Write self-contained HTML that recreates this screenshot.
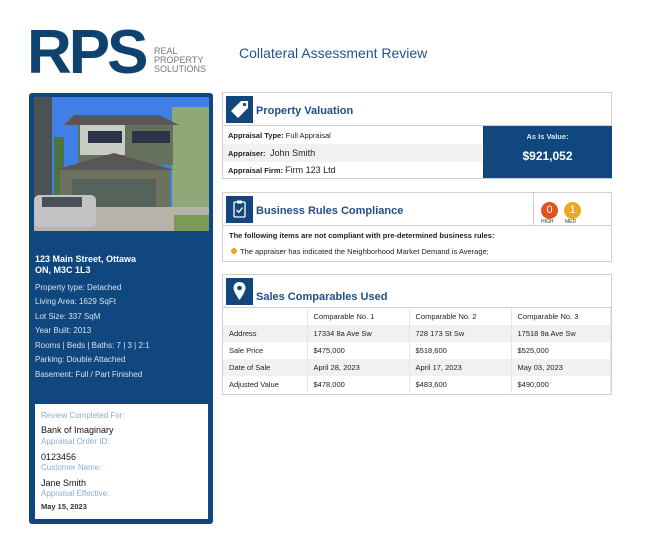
<!DOCTYPE html>
<html><head><meta charset="utf-8"><style>
*{margin:0;padding:0;box-sizing:border-box}
body{width:650px;height:550px;background:#fff;font-family:"Liberation Sans",Arial,sans-serif;position:relative;overflow:hidden;color:#222}
.abs{position:absolute}
.panel{position:absolute;left:222px;width:390px;border:1px solid #cfcfcf;background:#fff}
.hdr{height:33px;border-bottom:1px solid #cfcfcf;position:relative}
.ico{position:absolute;left:3px;top:3px;width:27px;height:27px;background:#12467c}
.ttl{position:absolute;left:33px;top:12px;font-size:11px;font-weight:bold;color:#1f4f86}
.side{left:29px;top:93px;width:184px;height:431px;background:#0f477e;border-radius:3px}
.st{font-size:8px;color:#d6e2ef;position:absolute;left:35px}
.lbl{font-size:8px;color:#8aaed3;position:absolute;left:41px}
.val{font-size:9px;color:#111;position:absolute;left:41px}
table{border-collapse:collapse;width:100%;font-size:7.5px}
td{height:17px;padding-left:6px;border-right:1px solid #e6e6e6}
tr:nth-child(even) td{background:#f1f1f1}
</style></head><body>
<div class="abs" style="left:27px;top:20px;font-size:62px;font-weight:bold;color:#10426f;letter-spacing:-3px;line-height:66px">RPS</div>
<div class="abs" style="left:154px;top:47px;font-size:9px;line-height:9px;color:#777">REAL<br>PROPERTY<br>SOLUTIONS</div>
<div class="abs" style="left:239px;top:45px;font-size:14px;color:#1e5490">Collateral Assessment Review</div>

<div class="abs side"></div>
<svg class="abs" style="left:34px;top:97px" width="175" height="134" viewBox="0 0 175 134">
<rect width="175" height="134" fill="#3f7fe6"/>
<rect x="0" y="0" width="18" height="110" fill="#4a5254"/>
<rect x="138" y="10" width="37" height="115" fill="#8fa877"/>
<rect x="20" y="40" width="10" height="70" fill="#4d7340"/>
<polygon points="40,18 125,18 145,28 30,28" fill="#5a5658"/>
<rect x="44" y="28" width="95" height="40" fill="#66705e"/>
<rect x="46" y="28" width="45" height="30" fill="#c9ccc4"/>
<rect x="54" y="34" width="34" height="12" fill="#2a3446"/>
<rect x="98" y="34" width="38" height="12" fill="#2a3446"/>
<polygon points="20,73 80,56 140,73" fill="#5a5658"/>
<rect x="26" y="73" width="110" height="52" fill="#6d725f"/>
<rect x="38" y="82" width="84" height="40" fill="#55635a"/>
<rect x="0" y="110" width="175" height="24" fill="#b8b3a9"/>
<rect x="140" y="118" width="35" height="16" fill="#7a9a55"/>
<rect x="0" y="98" width="62" height="32" rx="5" fill="#c3c3c6"/>
<rect x="8" y="100" width="40" height="10" fill="#4a5058"/>
</svg>
<div class="abs" style="left:35px;top:254px;font-size:9px;font-weight:bold;color:#fff;line-height:11px">123 Main Street, Ottawa<br>ON, M3C 1L3</div>
<div class="st" style="top:283px">Property type: Detached</div>
<div class="st" style="top:297px">Living Area: 1629 SqFt</div>
<div class="st" style="top:312px">Lot Size: 337 SqM</div>
<div class="st" style="top:326px">Year Built: 2013</div>
<div class="st" style="top:341px">Rooms | Beds | Baths: 7 | 3 | 2:1</div>
<div class="st" style="top:355px">Parking: Double Attached</div>
<div class="st" style="top:370px">Basement: Full / Part Finished</div>
<div class="abs" style="left:35px;top:404px;width:173px;height:115px;background:#fff"></div>
<div class="lbl" style="top:411px">Review Completed For:</div>
<div class="val" style="top:425px">Bank of Imaginary</div>
<div class="lbl" style="top:437px">Appraisal Order ID:</div>
<div class="val" style="top:452px">0123456</div>
<div class="lbl" style="top:463px">Customer Name:</div>
<div class="val" style="top:478px">Jane Smith</div>
<div class="lbl" style="top:489px">Appraisal Effective:</div>
<div class="val" style="top:502px;font-size:7.5px;font-weight:bold;color:#333">May 15, 2023</div>

<div class="panel" style="top:92px;height:87px">
<div class="hdr"><div class="ico"><svg width="27" height="27" viewBox="0 0 27 27"><path d="M15 5 L22 5 L22 12 L12 22 L5 15 Z" fill="#fff"/><circle cx="18.5" cy="8.5" r="1.6" fill="#12467c"/></svg></div><div class="ttl">Property Valuation</div></div>
<div class="abs" style="left:0;top:34px;width:259px;font-size:7.5px">
<div style="height:17px;padding:4px 0 0 5px"><b>Appraisal Type:</b> Full Appraisal</div>
<div style="height:18px;padding:4px 0 0 5px;background:#f1f1f1"><b>Appraiser:</b> <span style="font-size:9px">&nbsp;John Smith</span></div>
<div style="height:17px;padding:3px 0 0 5px"><b>Appraisal Firm:</b> <span style="font-size:9px">Firm 123 Ltd</span></div>
</div>
<div class="abs" style="left:260px;top:33px;width:129px;height:52px;background:#0f477e;color:#fff;text-align:center">
<div style="font-size:7.5px;font-weight:bold;margin-top:6px;color:#dfe8f2">As Is Value:</div>
<div style="font-size:12px;font-weight:bold;margin-top:8px">$921,052</div></div>
</div>

<div class="panel" style="top:192px;height:70px">
<div class="hdr"><div class="ico"><svg width="27" height="27" viewBox="0 0 27 27"><rect x="8" y="6" width="11" height="15" rx="1" fill="none" stroke="#fff" stroke-width="1.3"/><rect x="11" y="4.5" width="5" height="3" fill="#fff"/><path d="M10.5 14 L12.8 16.3 L16.5 11.5" fill="none" stroke="#fff" stroke-width="1.3"/></svg></div><div class="ttl" style="top:12px">Business Rules Compliance</div>
<div class="abs" style="left:310px;top:0;width:1px;height:33px;background:#cfcfcf"></div>
<div class="abs" style="left:318px;top:9px;width:17px;height:17px;border-radius:50%;background:#e0531f;color:#fff;font-size:11px;text-align:center;line-height:17px">0</div>
<div class="abs" style="left:341px;top:9px;width:17px;height:17px;border-radius:50%;background:#eba91d;color:#fff;font-size:11px;text-align:center;line-height:17px">1</div>
<div class="abs" style="left:318px;top:26px;font-size:5px;color:#333">HIGH</div>
<div class="abs" style="left:342px;top:26px;font-size:5px;color:#333">MED</div>
</div>
<div class="abs" style="left:6px;top:38px;font-size:7.5px;font-weight:bold">The following items are not compliant with pre-determined business rules:</div>
<div class="abs" style="left:8px;top:55px;width:6px;height:6px;border-radius:50%;background:#e7a81e"></div>
<div class="abs" style="left:17px;top:54px;font-size:7.5px">The appraiser has indicated the Neighborhood Market Demand is Average;</div>
</div>

<div class="panel" style="top:274px;height:121px">
<div class="hdr"><div class="ico"><svg width="27" height="27" viewBox="0 0 27 27"><path d="M13.5 4 C9.5 4 7.5 7 7.5 10 C7.5 14 13.5 22 13.5 22 C13.5 22 19.5 14 19.5 10 C19.5 7 17.5 4 13.5 4 Z" fill="#fff"/><circle cx="13.5" cy="10" r="2.3" fill="#12467c"/></svg></div><div class="ttl" style="top:16px">Sales Comparables Used</div></div>
<table>
<tr><td style="width:84px"></td><td style="width:102px">Comparable No. 1</td><td style="width:102px">Comparable No. 2</td><td>Comparable No. 3</td></tr>
<tr><td>Address</td><td>17334 8a Ave Sw</td><td>728 173 St Sw</td><td>17518 9a Ave Sw</td></tr>
<tr><td>Sale Price</td><td>$475,000</td><td>$518,600</td><td>$525,000</td></tr>
<tr><td>Date of Sale</td><td>April 28, 2023</td><td>April 17, 2023</td><td>May 03, 2023</td></tr>
<tr><td>Adjusted Value</td><td>$478,000</td><td>$483,600</td><td>$490,000</td></tr>
</table>
</div>
</body></html>
